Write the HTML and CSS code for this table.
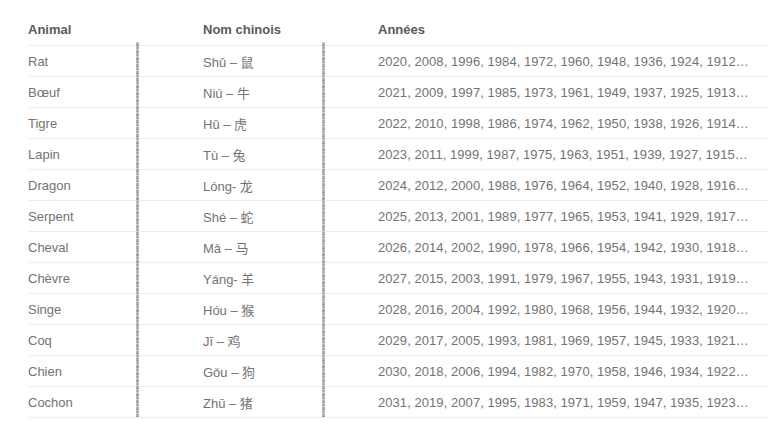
FILE: index.html
```html
<!DOCTYPE html>
<html lang="fr">
<head>
<meta charset="utf-8">
<title>Zodiaque chinois</title>
<link rel="stylesheet" href="styles.css">
</head>
<body>
<div class="wrap">
  <div class="table">
    <div class="row head"><div>Animal</div><div>Nom chinois</div><div>Années</div></div>
    <div class="row"><div>Rat</div><div>Shǔ – 鼠</div><div class="years">2020, 2008, 1996, 1984, 1972, 1960, 1948, 1936, 1924, 1912…</div></div>
    <div class="row"><div>Bœuf</div><div>Niú – 牛</div><div class="years">2021, 2009, 1997, 1985, 1973, 1961, 1949, 1937, 1925, 1913…</div></div>
    <div class="row"><div>Tigre</div><div>Hǔ – 虎</div><div class="years">2022, 2010, 1998, 1986, 1974, 1962, 1950, 1938, 1926, 1914…</div></div>
    <div class="row"><div>Lapin</div><div>Tù – 兔</div><div class="years">2023, 2011, 1999, 1987, 1975, 1963, 1951, 1939, 1927, 1915…</div></div>
    <div class="row"><div>Dragon</div><div>Lóng- 龙</div><div class="years">2024, 2012, 2000, 1988, 1976, 1964, 1952, 1940, 1928, 1916…</div></div>
    <div class="row"><div>Serpent</div><div>Shé – 蛇</div><div class="years">2025, 2013, 2001, 1989, 1977, 1965, 1953, 1941, 1929, 1917…</div></div>
    <div class="row"><div>Cheval</div><div>Mǎ – 马</div><div class="years">2026, 2014, 2002, 1990, 1978, 1966, 1954, 1942, 1930, 1918…</div></div>
    <div class="row"><div>Chèvre</div><div>Yáng- 羊</div><div class="years">2027, 2015, 2003, 1991, 1979, 1967, 1955, 1943, 1931, 1919…</div></div>
    <div class="row"><div>Singe</div><div>Hóu – 猴</div><div class="years">2028, 2016, 2004, 1992, 1980, 1968, 1956, 1944, 1932, 1920…</div></div>
    <div class="row"><div>Coq</div><div>Jī – 鸡</div><div class="years">2029, 2017, 2005, 1993, 1981, 1969, 1957, 1945, 1933, 1921…</div></div>
    <div class="row"><div>Chien</div><div>Gǒu – 狗</div><div class="years">2030, 2018, 2006, 1994, 1982, 1970, 1958, 1946, 1934, 1922…</div></div>
    <div class="row"><div>Cochon</div><div>Zhū – 猪</div><div class="years">2031, 2019, 2007, 1995, 1983, 1971, 1959, 1947, 1935, 1923…</div></div>
  </div>
  <div class="bar bar-1"></div>
  <div class="bar bar-2"></div>
</div>
</body>
</html>
```
FILE: styles.css
```css
html, body {
  margin: 0;
  padding: 0;
  background: #ffffff;
}
body {
  font-family: "Liberation Sans", Arial, "Noto Sans CJK SC", sans-serif;
  font-size: 13px;
  color: #737373;
  overflow: hidden;
}
.wrap {
  position: relative;
  margin-top: 14px;
  margin-left: 28px;
  width: 740px;
}
.table {
  display: flex;
  flex-direction: column;
}
.row {
  display: grid;
  grid-template-columns: 175px 175px 1fr;
  height: 30px;
  align-items: center;
  border-bottom: 1px solid #ededed;
}
.head {
  height: 31px;
}
.row > div {
  white-space: nowrap;
}
.years {
  letter-spacing: 0.06px;
}
.head {
  font-weight: bold;
  color: #5a5a5a;
}
.bar {
  position: absolute;
  top: 28px;
  width: 3px;
  height: 375px;
  background:
    repeating-linear-gradient(to bottom, rgba(255,255,255,0.45) 0 1px, rgba(0,0,0,0) 1px 3px, rgba(0,0,0,0.1) 3px 4px, rgba(255,255,255,0.3) 4px 5px, rgba(0,0,0,0) 5px 7px),
    linear-gradient(to right, #c4c4c4, #a0a0a0 50%, #c0c0c0);
}
.bar-1 {
  left: 108px;
}
.bar-2 {
  left: 294px;
}
```
